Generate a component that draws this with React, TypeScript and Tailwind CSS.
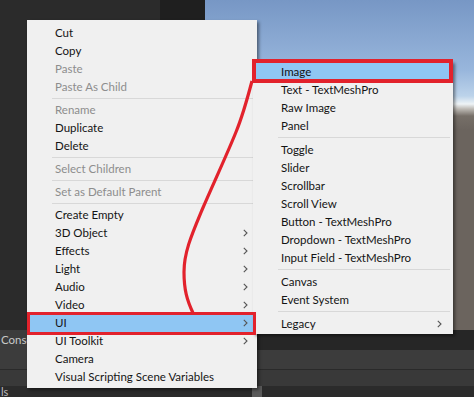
import React from "react";

type Item = { label: string; disabled?: boolean; sub?: boolean; active?: boolean } | "sep";

const mainItems: Item[] = [
  { label: "Cut" },
  { label: "Copy" },
  { label: "Paste", disabled: true },
  { label: "Paste As Child", disabled: true },
  "sep",
  { label: "Rename", disabled: true },
  { label: "Duplicate" },
  { label: "Delete" },
  "sep",
  { label: "Select Children", disabled: true },
  "sep",
  { label: "Set as Default Parent", disabled: true },
  "sep",
  { label: "Create Empty" },
  { label: "3D Object", sub: true },
  { label: "Effects", sub: true },
  { label: "Light", sub: true },
  { label: "Audio", sub: true },
  { label: "Video", sub: true },
  { label: "UI", sub: true, active: true },
  { label: "UI Toolkit", sub: true },
  { label: "Camera" },
  { label: "Visual Scripting Scene Variables" },
];

const uiItems: Item[] = [
  { label: "Image", active: true },
  { label: "Text - TextMeshPro" },
  { label: "Raw Image" },
  { label: "Panel" },
  "sep",
  { label: "Toggle" },
  { label: "Slider" },
  { label: "Scrollbar" },
  { label: "Scroll View" },
  { label: "Button - TextMeshPro" },
  { label: "Dropdown - TextMeshPro" },
  { label: "Input Field - TextMeshPro" },
  "sep",
  { label: "Canvas" },
  { label: "Event System" },
  "sep",
  { label: "Legacy", sub: true },
];

const Chevron = () => (
  <svg width="5" height="8" viewBox="0 0 5 8" className="shrink-0">
    <polyline points="0.8,0.8 4,4 0.8,7.2" fill="none" stroke="#555" strokeWidth="1.1" />
  </svg>
);

interface MenuProps {
  items: Item[];
  className: string;
  sepClass: string;
  rowPad: string;
}

const Menu = ({ items, className, sepClass, rowPad }: MenuProps) => {
  return (
    <div className={`absolute bg-[#f0f0f0] shadow-[2px_2px_3px_rgba(0,0,0,0.45)] flex flex-col ${className}`}>
      {items.map((item, i) =>
        item === "sep" ? (
          <div key={i} className={`h-px bg-[#d8d8d8] ml-[25px] mr-[3px] ${sepClass}`} />
        ) : (
          <div
            key={i}
            className={`flex items-center justify-between h-[18px] pl-[28px] ${rowPad} ${
              item.active ? "bg-[#8fc6f3]" : ""
            }`}
          >
            <span className={`leading-[18px] whitespace-nowrap ${item.disabled ? "text-[#8d8d8d]" : "text-[#141414]"}`}>
              {item.label}
            </span>
            {item.sub && <Chevron />}
          </div>
        )
      )}
    </div>
  );
};

export default function App() {
  return (
    <div className="relative w-[474px] h-[397px] overflow-hidden bg-[#2b2b2b] font-['Lato',sans-serif] text-[11.5px]">
      <div className="flex h-[330px]">
        <div className="w-[160px] bg-[#2b2b2b]" />
        <div className="w-[45px] bg-[#1f1f1f]" />
        <div className="flex-1 bg-[linear-gradient(to_bottom,#7797c5_0px,#98b6dc_70px,#bcd3ea_96px,#eef3f6_104px,#bcb8b3_109px,#766f68_116px,#6b645e_130px)]" />
      </div>
      <div className="flex flex-col">
        <div className="h-[20px] bg-[#262626] flex">
          <div className="w-[72px] bg-[#3c3c3c] text-[#c8c8c8] pl-[1px] leading-[20px]">Console</div>
        </div>
        <div className="h-[19px] bg-[#3c3c3c]" />
        <div className="h-px bg-[#2a2a2a]" />
        <div className="h-[16px] bg-[#393939]" />
        <div className="h-[11px] bg-[#2b2b2b] flex">
          <div className="w-[252px] text-[#bdbdbd] text-[11px] pl-[1px] leading-[11px]">ls</div>
          <div className="w-[10px] bg-[#5a5a5a]" />
        </div>
      </div>

      <Menu items={mainItems} className="left-[27px] top-[20px] w-[230px] pt-[4px] pb-[2px]" sepClass="my-[2px]" rowPad="pr-[9px]" />
      <Menu items={uiItems} className="left-[253px] top-[61px] w-[200px] pt-[2px] pb-[1px]" sepClass="mt-[2px] mb-[3px]" rowPad="pr-[11px]" />

      <div className="absolute left-[27px] top-[312px] w-[229px] h-[23px] border-[3px] border-[#e2222c]" />
      <div className="absolute left-[252px] top-[59px] w-[201px] h-[24px] border-[4px] border-[#e2222c]" />
      <svg className="absolute left-0 top-0 pointer-events-none" width="474" height="397" viewBox="0 0 474 397">
        <path
          d="M252 81 C247 100, 243 115, 236 132 C228 152, 215 180, 202 210 C192 234, 184 252, 184 272 C184 290, 187 300, 193 313"
          fill="none"
          stroke="#e2222c"
          strokeWidth="3.2"
        />
      </svg>
    </div>
  );
}
